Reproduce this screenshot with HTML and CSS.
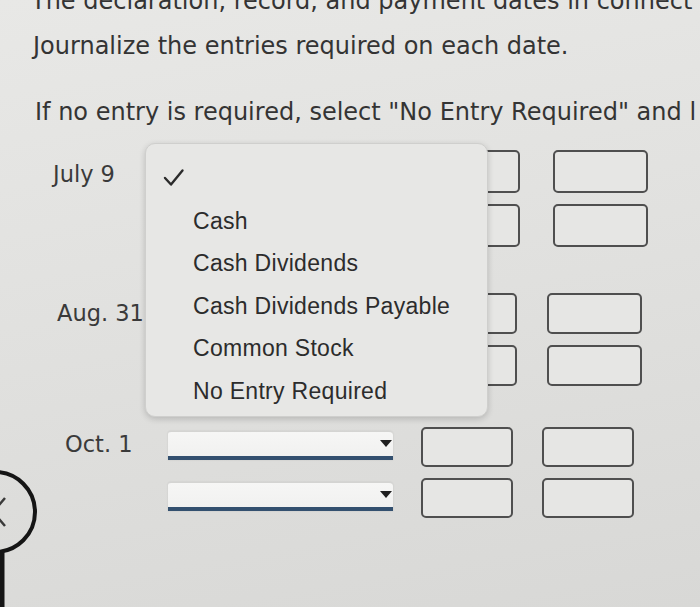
FILE: index.html
```html
<!DOCTYPE html>
<html>
<head>
<meta charset="utf-8">
<link rel="stylesheet" href="styles.css">
</head>
<body>
<div class="page">
  <p class="line line-cut">The declaration, record, and payment dates in connect</p>
  <p class="line line-main">Journalize the entries required on each date.</p>
  <p class="line line-if">If no entry is required, select "No Entry Required" and l</p>

  <div class="entries">
    <div class="group group-jul">
      <div class="label">July 9</div>
      <div class="select"><span class="caret"></span></div>
      <div class="box"></div>
      <div class="box"></div>
      <div class="label"></div>
      <div class="select"><span class="caret"></span></div>
      <div class="box"></div>
      <div class="box"></div>
    </div>
    <div class="group group-aug">
      <div class="label">Aug. 31</div>
      <div class="select"><span class="caret"></span></div>
      <div class="box"></div>
      <div class="box"></div>
      <div class="label"></div>
      <div class="select"><span class="caret"></span></div>
      <div class="box"></div>
      <div class="box"></div>
    </div>
    <div class="group group-oct">
      <div class="label">Oct. 1</div>
      <div class="select"><span class="caret"></span></div>
      <div class="box"></div>
      <div class="box"></div>
      <div class="label"></div>
      <div class="select"><span class="caret"></span></div>
      <div class="box"></div>
      <div class="box"></div>
    </div>
  </div>

  <div class="menu">
    <div class="menu-item menu-checked">
      <svg class="check" width="22" height="20" viewBox="0 0 22 20"><polyline points="2,10 8,16.5 19.5,2.5" fill="none" stroke="#2b2b2b" stroke-width="2.4" stroke-linecap="round" stroke-linejoin="round"/></svg>
    </div>
    <div class="menu-item">Cash</div>
    <div class="menu-item">Cash Dividends</div>
    <div class="menu-item">Cash Dividends Payable</div>
    <div class="menu-item">Common Stock</div>
    <div class="menu-item">No Entry Required</div>
  </div>

  <svg class="zoom-tool" width="45" height="142" viewBox="0 0 45 142">
    <circle cx="-5" cy="47" r="40" fill="none" stroke="#151515" stroke-width="4"/>
    <line x1="2" y1="86" x2="2" y2="142" stroke="#151515" stroke-width="5"/>
    <polyline points="5,33 -7,47 5,61" fill="none" stroke="#3a3a3a" stroke-width="2.5"/>
  </svg>
</div>
</body>
</html>
```

FILE: styles.css
```css
html, body {
  margin: 0;
  padding: 0;
}

body {
  width: 700px;
  height: 607px;
  overflow: hidden;
  background: linear-gradient(170deg, #e8e8e6 0%, #e1e1df 45%, #d8d8d6 100%);
  font-family: "DejaVu Sans", Verdana, sans-serif;
  color: #343434;
}

.page {
  position: relative;
  display: flow-root;
  width: 700px;
  height: 607px;
  overflow: hidden;
}

.line {
  margin: 0;
  font-size: 24px;
  line-height: 41px;
  white-space: nowrap;
  padding-left: 33px;
}

.line-cut {
  margin-top: -19px;
  padding-left: 31px;
}

.line-main {
  margin-top: 4px;
}

.line-if {
  margin-top: 25px;
  padding-left: 35px;
}

.entries {
  margin-top: 17px;
  display: flex;
  flex-direction: column;
}

.group {
  display: grid;
  grid-template-columns: var(--lw) 225px var(--bw) var(--bw);
  grid-auto-rows: var(--rh);
  column-gap: var(--gap);
  row-gap: 11px;
  padding-left: var(--pl);
}

.group-jul {
  --pl: 53px;
  --lw: 81px;
  --bw: 95px;
  --gap: 33px;
  --rh: 43px;
  --lt: 11px;
}

.group-aug {
  --pl: 57px;
  --lw: 80px;
  --bw: 95px;
  --gap: 30px;
  --rh: 41px;
  --lt: 7px;
  margin-top: 46px;
}

.group-oct {
  --pl: 65px;
  --lw: 74px;
  --bw: 92px;
  --gap: 28.5px;
  --rh: 40px;
  --lt: 4px;
  margin-top: 41px;
}

.label {
  font-size: 22.5px;
  line-height: 27px;
  padding-top: var(--lt);
  white-space: nowrap;
  color: #3a3a3a;
}

.select {
  position: relative;
  margin-top: 4px;
  height: 24px;
  background: linear-gradient(#f6f6f5, #f1f1f0);
  border-top: 1px solid #d4d4d2;
  border-bottom: 4px solid #33506f;
  border-radius: 3px 4px 0 0;
  box-shadow: 0 0 2px rgba(0, 0, 0, 0.12);
}

.caret {
  position: absolute;
  right: 1px;
  top: 8px;
  width: 0;
  height: 0;
  border-left: 6px solid transparent;
  border-right: 6px solid transparent;
  border-top: 7px solid #1f1f1f;
}

.box {
  box-sizing: border-box;
  border: 2px solid #4f4f4f;
  border-radius: 5px;
  background: #e6e6e4;
}

.menu {
  position: absolute;
  left: 145px;
  top: 143px;
  width: 343px;
  height: 274px;
  box-sizing: border-box;
  padding-top: 13px;
  background: #e7e7e5;
  border: 1px solid #cfcfcd;
  border-radius: 10px;
  box-shadow: 0 2px 6px rgba(0, 0, 0, 0.18);
  font-family: "Liberation Sans", Arial, sans-serif;
  font-size: 23px;
  color: #2c2c2c;
}

.menu-item {
  height: 42.5px;
  line-height: 42.5px;
  padding-left: 47px;
  white-space: nowrap;
  letter-spacing: 0.3px;
}

.menu-checked {
  position: relative;
  padding-left: 0;
}

.check {
  position: absolute;
  left: 17px;
  top: 11px;
}

.zoom-tool {
  position: absolute;
  left: 0;
  top: 465px;
}
```
